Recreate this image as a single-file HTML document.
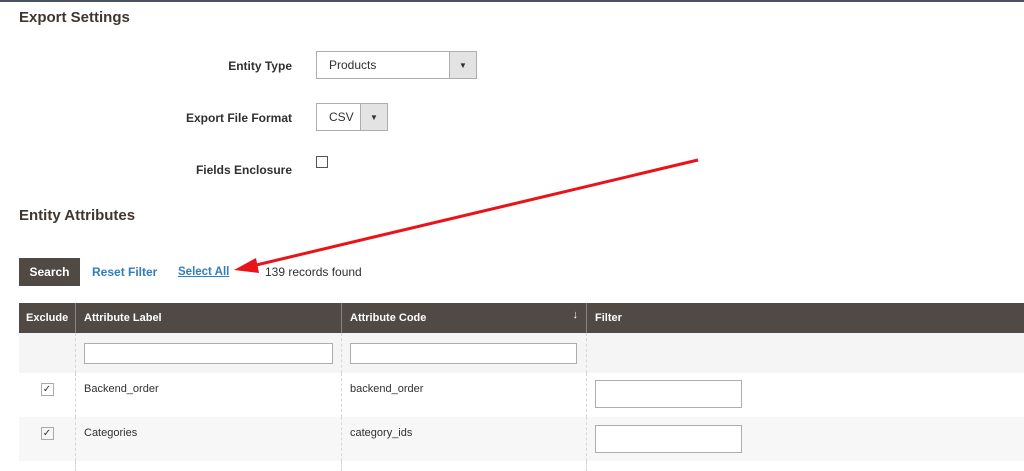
<!DOCTYPE html><html><head><style>
body{margin:0;width:1024px;height:467px;overflow:hidden;background:#fff;font-family:"Liberation Sans",sans-serif;color:#303030;position:relative}
.a{position:absolute}
.lbl{font-weight:bold;font-size:12px;color:#303030;text-align:right;width:150px}
h2{margin:0;font-size:15px;font-weight:bold;color:#41362f;position:absolute}
.sel{position:absolute;border:1px solid #adadad;background:#fff;font-size:12px;box-sizing:border-box}
.sel .btn{position:absolute;right:0;top:0;bottom:0;background:#e3e3e3;border-left:1px solid #adadad;width:26px;font-size:8px;text-align:center;line-height:28px}
table{position:absolute;left:19px;top:303px;width:1005px;border-collapse:collapse;font-size:11px;table-layout:fixed}
th{background:#514943;color:#fff;text-align:left;height:30px;padding:0 8px;font-size:11px;border-left:1px solid #8a837f}
th:first-child{border-left:none}
td{border-left:1px dashed #d6d6d6;padding:0 8px;vertical-align:top}
td:first-child{border-left:none;text-align:center}
.inp{height:21px;border:1px solid #adadad;box-sizing:border-box;background:#fff}
.cb{display:inline-block;width:11px;height:11px;border:1px solid #aaa;font-size:10px;line-height:11px;text-align:center;color:#333}
</style></head><body>
<div class="a" style="left:0;top:0;width:1024px;height:2px;background:#4a5460"></div>
<h2 style="left:19px;top:9px">Export Settings</h2>
<div class="a lbl" style="left:142px;top:59px">Entity Type</div>
<div class="sel" style="left:316px;top:51px;width:161px;height:28px;line-height:26px;padding-left:12px">Products<div class="btn">▼</div></div>
<div class="a lbl" style="left:142px;top:111px">Export File Format</div>
<div class="sel" style="left:316px;top:103px;width:72px;height:28px;line-height:26px;padding-left:12px">CSV<div class="btn">▼</div></div>
<div class="a lbl" style="left:142px;top:163px">Fields Enclosure</div>
<div class="a" style="left:316px;top:156px;width:10px;height:10px;border:1px solid #555"></div>
<h2 style="left:19px;top:207px">Entity Attributes</h2>
<div class="a" style="left:19px;top:258px;width:61px;height:28px;background:#514943;color:#fff;font-weight:bold;font-size:12px;text-align:center;line-height:28px">Search</div>
<div class="a" style="left:92px;top:265px;font-size:12px;font-weight:bold;color:#2f7dbf">Reset Filter</div>
<div class="a" style="left:178px;top:266px;font-size:11.5px;font-weight:bold;color:#2f7dbf;text-decoration:underline">Select All</div>
<div class="a" style="left:265px;top:265px;font-size:12px;color:#303030">139 records found</div>
<table>
<tr><th style="width:42px;padding:0 7px">Exclude</th><th style="width:249px">Attribute Label</th><th style="width:228px;position:relative">Attribute Code<span style="position:absolute;right:8px;top:6px">↓</span></th><th>Filter</th></tr>
<tr style="background:#f5f5f5;height:40px"><td></td><td style="vertical-align:middle"><div class="inp" style="width:249px"></div></td><td style="vertical-align:middle"><div class="inp" style="width:227px"></div></td><td></td></tr>
<tr style="height:44px"><td style="padding-top:10px"><span class="cb">✓</span></td><td style="padding-top:10px">Backend_order</td><td style="padding-top:10px">backend_order</td><td style="padding-top:7px"><div class="inp" style="width:147px;height:28px"></div></td></tr>
<tr style="background:#f7f7f7;height:44px"><td style="padding-top:10px"><span class="cb">✓</span></td><td style="padding-top:10px">Categories</td><td style="padding-top:10px">category_ids</td><td style="padding-top:8px"><div class="inp" style="width:147px;height:28px"></div></td></tr>
<tr style="height:10px"><td></td><td></td><td></td><td></td></tr>
</table>
<svg class="a" style="left:0;top:0" width="1024" height="467"><line x1="698" y1="160" x2="252" y2="266" stroke="#e8141a" stroke-width="3"/><polygon points="234,270 256,258 259,273" fill="#e8141a"/></svg>
</body></html>
